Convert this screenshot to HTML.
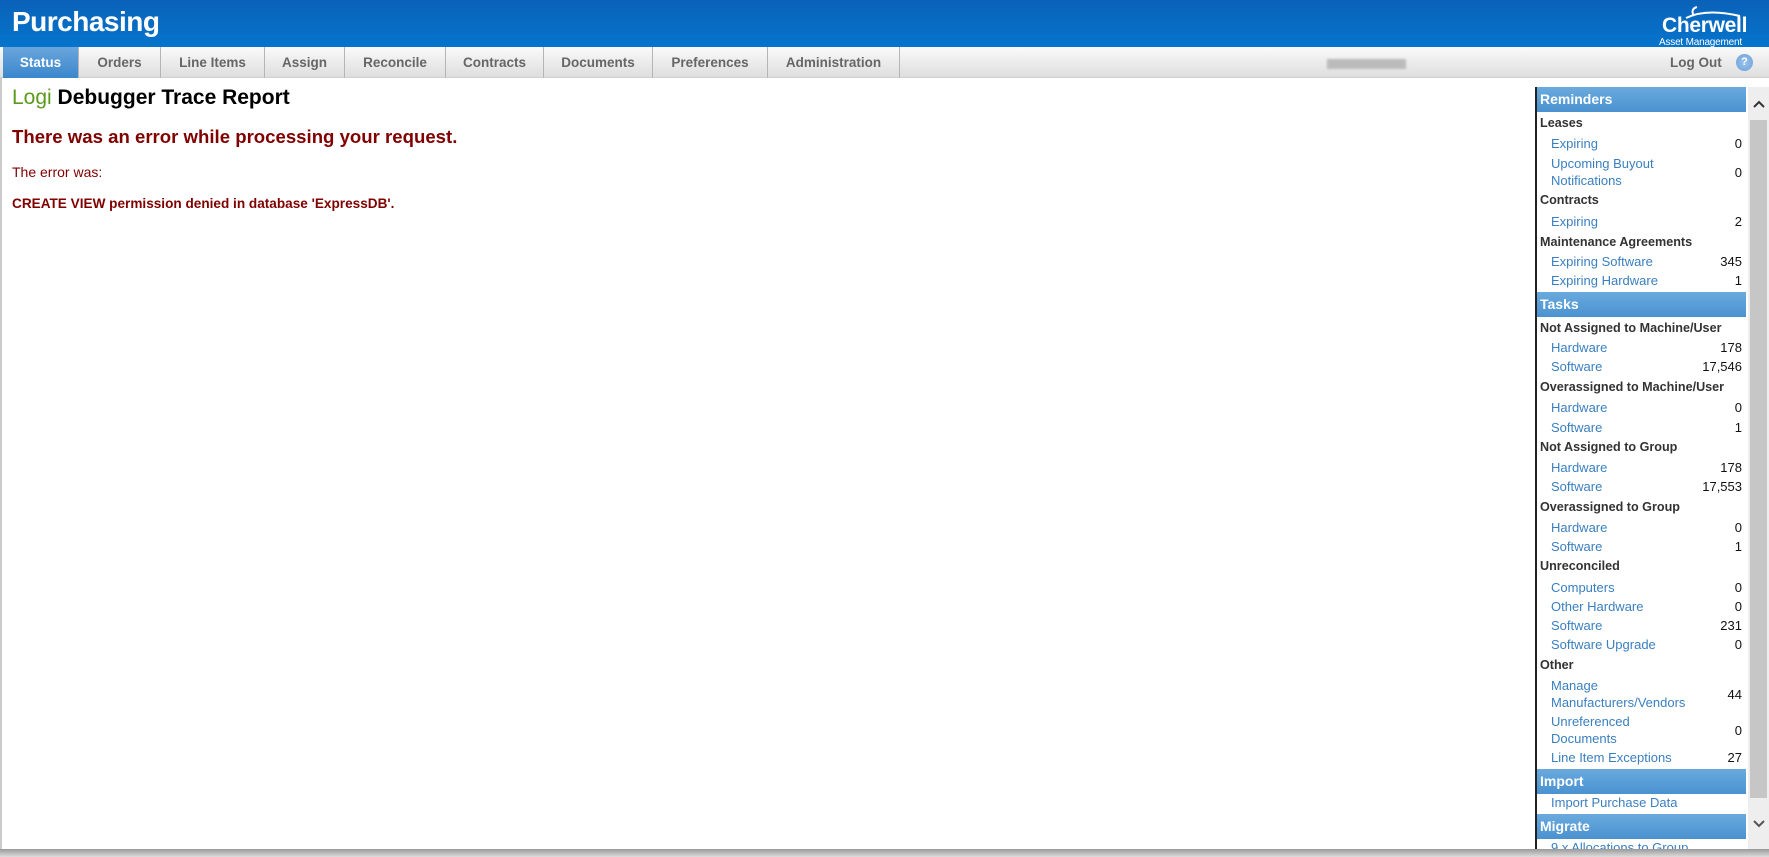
<!DOCTYPE html>
<html><head><meta charset="utf-8"><style>
*{margin:0;padding:0;box-sizing:border-box}
body{width:1769px;height:857px;overflow:hidden;background:#fff;font-family:"Liberation Sans",sans-serif;position:relative}
.hdr{position:absolute;left:0;top:0;width:1769px;height:47px;background:linear-gradient(#0a62b8,#0674cc)}
.hdr h1{position:absolute;left:12px;top:6px;color:#fff;font-size:28px;font-weight:bold;letter-spacing:-0.5px}
.logo{position:absolute;left:1662px;top:14px;color:#fff;font-weight:bold;font-size:21px;letter-spacing:-0.3px}
.logo small{position:absolute;left:-3px;top:23px;font-size:10px;font-weight:normal;white-space:nowrap;letter-spacing:-0.2px}
.tabs{position:absolute;left:0;top:47px;width:1769px;height:31px;background:linear-gradient(#fafafa,#dedede);border-bottom:1px solid #cfcfcf}
.tab{position:absolute;top:0;height:31px;line-height:31px;text-align:center;font-size:13.5px;font-weight:bold;color:#666;border-right:1px solid #b5b5b5}
.tab.on{background:linear-gradient(#69a6dc,#3b86cc);color:#fff}
.main{position:absolute;left:12px;white-space:nowrap}
.side{position:absolute;left:1535px;top:87px;width:211px;height:762px;border-left:2px solid #222;overflow:hidden;font-size:13px}
.sh{position:absolute;left:0;width:209px;height:25px;background:linear-gradient(#6aaade,#4a92d0);color:#fff;font-weight:bold;padding-left:3px;line-height:25px;font-size:14px}
.c{position:absolute;left:3px;color:#333;font-weight:bold;font-size:12.6px}
.l{position:absolute;left:14px;color:#3a7fc0;line-height:17px}
.n{position:absolute;right:4px;color:#111;line-height:17px}
.sb{position:absolute;left:1748px;top:87px;width:21px;height:762px;background:#eee}
</style></head><body>
<div class="hdr"><h1>Purchasing</h1>
<div class="logo">Cherwell<small>Asset Management</small></div>
<svg style="position:absolute;left:1680px;top:4px" width="65" height="16"><path d="M14 12 Q10 5 17 3 M6 14 Q26 4 60 12" stroke="#fff" stroke-width="2" fill="none"/></svg>
</div>
<div class="tabs">
<div class="tab on" style="left:3px;width:76px">Status</div>
<div class="tab" style="left:79px;width:82px">Orders</div>
<div class="tab" style="left:161px;width:104px">Line Items</div>
<div class="tab" style="left:265px;width:80px">Assign</div>
<div class="tab" style="left:345px;width:101px">Reconcile</div>
<div class="tab" style="left:446px;width:98px">Contracts</div>
<div class="tab" style="left:544px;width:109px">Documents</div>
<div class="tab" style="left:653px;width:115px">Preferences</div>
<div class="tab" style="left:768px;width:132px">Administration</div>
<div style="position:absolute;left:1327px;top:12px;width:79px;height:10px;background:#bbb;filter:blur(1px)"></div>
<div style="position:absolute;left:1670px;top:0;line-height:31px;font-size:13.5px;color:#666;font-weight:bold">Log Out</div>
<div style="position:absolute;left:1736px;top:7px;width:17px;height:17px;border-radius:50%;background:radial-gradient(#9cc4ee,#6a9fd6);color:#fff;font-size:11px;text-align:center;line-height:17px;font-weight:bold">?</div>
</div>
<div class="main" style="top:86px;font-size:21px;font-weight:bold"><span style="color:#5a9a1c;font-weight:normal">Logi</span> Debugger Trace Report</div>
<div class="main" style="top:126px;font-size:18.6px;font-weight:bold;color:#800000">There was an error while processing your request.</div>
<div class="main" style="top:164px;font-size:14px;color:#800000">The error was:</div>
<div class="main" style="top:196px;font-size:13.6px;font-weight:bold;color:#800000">CREATE VIEW permission denied in database 'ExpressDB'.</div>
<div class="side">
<div class="sh" style="top:0">Reminders</div>
<div class="c" style="top:29px">Leases</div>
<div class="l" style="top:48px">Expiring</div><div class="n" style="top:48px">0</div>
<div class="l" style="top:68px">Upcoming Buyout<br>Notifications</div><div class="n" style="top:77px">0</div>
<div class="c" style="top:106px">Contracts</div>
<div class="l" style="top:126px">Expiring</div><div class="n" style="top:126px">2</div>
<div class="c" style="top:148px">Maintenance Agreements</div>
<div class="l" style="top:166px">Expiring Software</div><div class="n" style="top:166px">345</div>
<div class="l" style="top:185px">Expiring Hardware</div><div class="n" style="top:185px">1</div>
<div class="sh" style="top:205px">Tasks</div>
<div class="c" style="top:234px">Not Assigned to Machine/User</div>
<div class="l" style="top:252px">Hardware</div><div class="n" style="top:252px">178</div>
<div class="l" style="top:271px">Software</div><div class="n" style="top:271px">17,546</div>
<div class="c" style="top:293px">Overassigned to Machine/User</div>
<div class="l" style="top:312px">Hardware</div><div class="n" style="top:312px">0</div>
<div class="l" style="top:332px">Software</div><div class="n" style="top:332px">1</div>
<div class="c" style="top:353px">Not Assigned to Group</div>
<div class="l" style="top:372px">Hardware</div><div class="n" style="top:372px">178</div>
<div class="l" style="top:391px">Software</div><div class="n" style="top:391px">17,553</div>
<div class="c" style="top:413px">Overassigned to Group</div>
<div class="l" style="top:432px">Hardware</div><div class="n" style="top:432px">0</div>
<div class="l" style="top:451px">Software</div><div class="n" style="top:451px">1</div>
<div class="c" style="top:472px">Unreconciled</div>
<div class="l" style="top:492px">Computers</div><div class="n" style="top:492px">0</div>
<div class="l" style="top:511px">Other Hardware</div><div class="n" style="top:511px">0</div>
<div class="l" style="top:530px">Software</div><div class="n" style="top:530px">231</div>
<div class="l" style="top:549px">Software Upgrade</div><div class="n" style="top:549px">0</div>
<div class="c" style="top:571px">Other</div>
<div class="l" style="top:590px">Manage<br>Manufacturers/Vendors</div><div class="n" style="top:599px">44</div>
<div class="l" style="top:626px">Unreferenced<br>Documents</div><div class="n" style="top:635px">0</div>
<div class="l" style="top:662px">Line Item Exceptions</div><div class="n" style="top:662px">27</div>
<div class="sh" style="top:682px">Import</div>
<div class="l" style="top:707px">Import Purchase Data</div>
<div class="sh" style="top:727px">Migrate</div>
<div class="l" style="top:752px">9 x Allocations to Group</div>
</div>
<div class="sb"><div style="position:absolute;left:2px;top:33px;width:17px;height:678px;background:#c6c6c6"></div>
<svg style="position:absolute;left:4px;top:12px" width="14" height="10"><path d="M2 8 L7 3 L12 8" stroke="#333" stroke-width="2" fill="none"/></svg>
<svg style="position:absolute;left:4px;top:732px" width="14" height="10"><path d="M2 2 L7 7 L12 2" stroke="#555" stroke-width="2" fill="none"/></svg>
</div>
<div style="position:absolute;left:0;top:849px;width:1769px;height:8px;background:linear-gradient(#999,#ddd)"></div>
<div style="position:absolute;left:0;top:78px;width:2px;height:771px;background:#ccc"></div>
</body></html>
